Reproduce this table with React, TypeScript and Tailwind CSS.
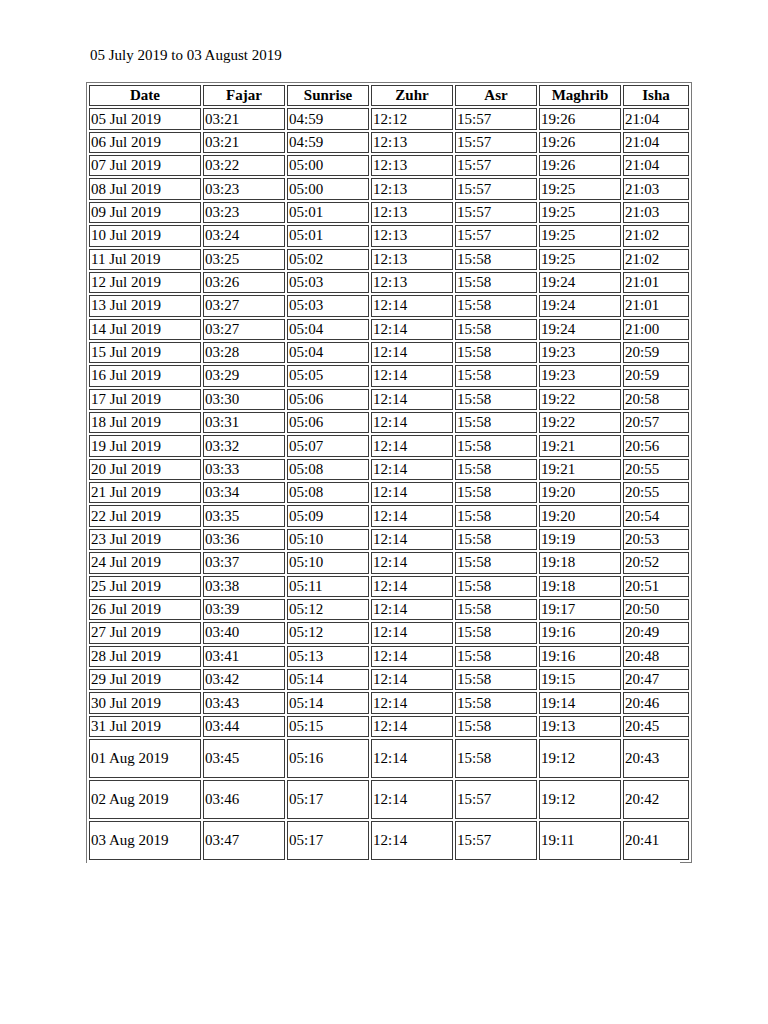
const rows: string[][] = [
  ["05 Jul 2019", "03:21", "04:59", "12:12", "15:57", "19:26", "21:04"],
  ["06 Jul 2019", "03:21", "04:59", "12:13", "15:57", "19:26", "21:04"],
  ["07 Jul 2019", "03:22", "05:00", "12:13", "15:57", "19:26", "21:04"],
  ["08 Jul 2019", "03:23", "05:00", "12:13", "15:57", "19:25", "21:03"],
  ["09 Jul 2019", "03:23", "05:01", "12:13", "15:57", "19:25", "21:03"],
  ["10 Jul 2019", "03:24", "05:01", "12:13", "15:57", "19:25", "21:02"],
  ["11 Jul 2019", "03:25", "05:02", "12:13", "15:58", "19:25", "21:02"],
  ["12 Jul 2019", "03:26", "05:03", "12:13", "15:58", "19:24", "21:01"],
  ["13 Jul 2019", "03:27", "05:03", "12:14", "15:58", "19:24", "21:01"],
  ["14 Jul 2019", "03:27", "05:04", "12:14", "15:58", "19:24", "21:00"],
  ["15 Jul 2019", "03:28", "05:04", "12:14", "15:58", "19:23", "20:59"],
  ["16 Jul 2019", "03:29", "05:05", "12:14", "15:58", "19:23", "20:59"],
  ["17 Jul 2019", "03:30", "05:06", "12:14", "15:58", "19:22", "20:58"],
  ["18 Jul 2019", "03:31", "05:06", "12:14", "15:58", "19:22", "20:57"],
  ["19 Jul 2019", "03:32", "05:07", "12:14", "15:58", "19:21", "20:56"],
  ["20 Jul 2019", "03:33", "05:08", "12:14", "15:58", "19:21", "20:55"],
  ["21 Jul 2019", "03:34", "05:08", "12:14", "15:58", "19:20", "20:55"],
  ["22 Jul 2019", "03:35", "05:09", "12:14", "15:58", "19:20", "20:54"],
  ["23 Jul 2019", "03:36", "05:10", "12:14", "15:58", "19:19", "20:53"],
  ["24 Jul 2019", "03:37", "05:10", "12:14", "15:58", "19:18", "20:52"],
  ["25 Jul 2019", "03:38", "05:11", "12:14", "15:58", "19:18", "20:51"],
  ["26 Jul 2019", "03:39", "05:12", "12:14", "15:58", "19:17", "20:50"],
  ["27 Jul 2019", "03:40", "05:12", "12:14", "15:58", "19:16", "20:49"],
  ["28 Jul 2019", "03:41", "05:13", "12:14", "15:58", "19:16", "20:48"],
  ["29 Jul 2019", "03:42", "05:14", "12:14", "15:58", "19:15", "20:47"],
  ["30 Jul 2019", "03:43", "05:14", "12:14", "15:58", "19:14", "20:46"],
  ["31 Jul 2019", "03:44", "05:15", "12:14", "15:58", "19:13", "20:45"],
  ["01 Aug 2019", "03:45", "05:16", "12:14", "15:58", "19:12", "20:43"],
  ["02 Aug 2019", "03:46", "05:17", "12:14", "15:57", "19:12", "20:42"],
  ["03 Aug 2019", "03:47", "05:17", "12:14", "15:57", "19:11", "20:41"],
];

const headers = ["Date", "Fajar", "Sunrise", "Zuhr", "Asr", "Maghrib", "Isha"];

// widths of each cell incl. its 1px border
const widths = ["w-[112px]", "w-[82px]", "w-[82px]", "w-[82px]", "w-[82px]", "w-[82px]", "w-[66px]"];

const cell = "border border-[#3a3a3a] px-px py-0 align-middle";

function App() {
  return (
    <div
      className="min-h-screen bg-white pl-[86px] pt-[47px] text-black"
      style={{ fontFamily: '"Liberation Serif", "Times New Roman", serif' }}
    >
      <div className="pl-[4px] text-[15px] leading-[17px]">05 July 2019 to 03 August 2019</div>

      <table className="mt-[18px] table-fixed border-separate border-spacing-[2px] border-t border-l border-r border-b-0 border-[#7a7a7a] text-[15px] leading-[17px]">
        <thead>
          <tr>
            {headers.map((h, i) => (
              <th key={h} className={`${cell} ${widths[i]} h-[21.37px] text-center font-bold`}>
                {h}
              </th>
            ))}
          </tr>
        </thead>
        <tbody>
          {rows.map((r, ri) => (
            <tr key={r[0]}>
              {r.map((v, ci) => (
                <td
                  key={ci}
                  className={`${cell} ${widths[ci]} ${ri >= 27 ? "h-[39px]" : "h-[21.37px]"} text-left`}
                >
                  {v}
                </td>
              ))}
            </tr>
          ))}
        </tbody>
      </table>

      {/* clipped bottom edge of the outer border */}
      <div className="flex w-[606px] justify-between">
        <div className="h-px w-px bg-[#7a7a7a]" />
        <div className="h-px w-[12px] bg-[#7a7a7a]" />
      </div>
    </div>
  );
}

export default App;
